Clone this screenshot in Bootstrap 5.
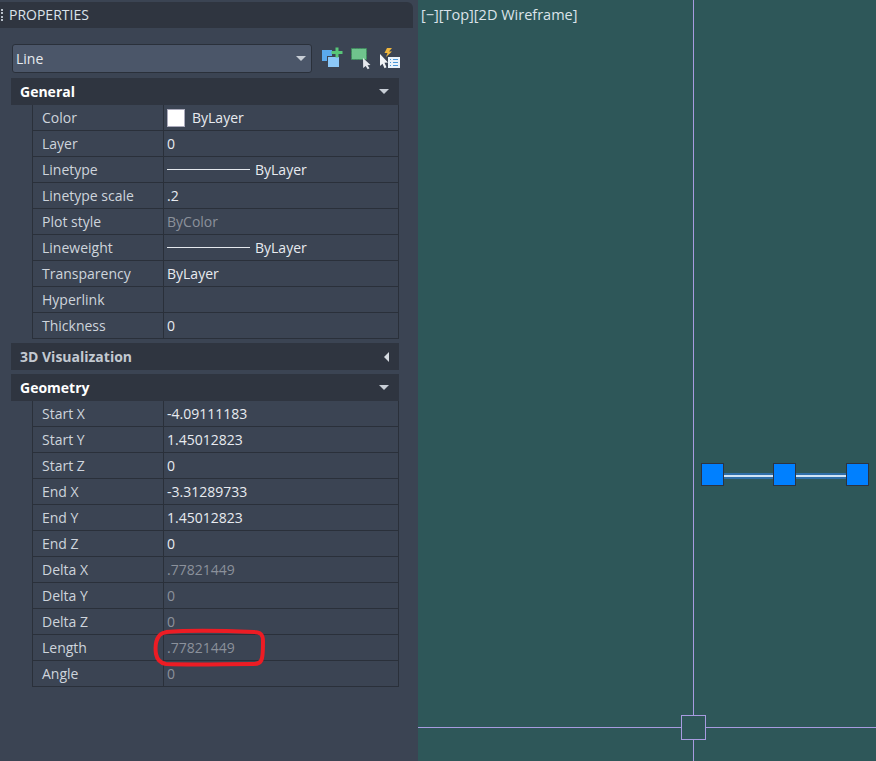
<!DOCTYPE html>
<html lang="en">
<head>
    <meta charset="UTF-8">
    <meta name="viewport" content="width=device-width, initial-scale=1.0">
    <title>Properties</title>
    <link href="https://cdn.jsdelivr.net/npm/bootstrap@5.3.3/dist/css/bootstrap.min.css" rel="stylesheet">
    <style>
        html, body { height: 100%; overflow: hidden; }
        body { background: #2e5759; font-family: "Open Sans", "Liberation Sans", sans-serif; font-size: 14px; }
        .app-shell { width: 876px; height: 761px; }
        .side-panel { width: 418px; height: 761px; background: #3b4453; flex: none; }
        .panel-head { width: 413px; height: 26px; background: #2f3540; color: #dce3ea; font-size: 14px; line-height: 22px; margin-top: 2px; border-top-right-radius: 6px; }
        .panel-grip { width: 2px; height: 12px; margin: 0 6px 0 1px; border-left: 2px dotted #b8c0ca; }
        .panel-body { padding: 16px 19px 0 11px; }
        .type-row { height: 28px; margin-bottom: 6px; padding-left: 1px; }
        .type-select { width: 300px; height: 29px; background: #4b5669; border: 1px solid #2a303a; border-radius: 3px; color: #e6ebf0; padding: 0 5px 0 3px; flex: none; }
        .tool-icons { gap: 5px; margin-left: 8px; flex: none; }
        .arrow-down { width: 0; height: 0; border-left: 5px solid transparent; border-right: 5px solid transparent; border-top: 5px solid #c8ced6; }
        .arrow-left { width: 0; height: 0; border-top: 5px solid transparent; border-bottom: 5px solid transparent; border-right: 5px solid #d5dae0; }
        .group-head { height: 27px; background: #2f3540; color: #fff; font-weight: 700; padding: 0 10px 0 9px; line-height: 27px; margin-bottom: 0; }
        .group-head.is-closed { color: #c3c9d1; margin-bottom: 4px; }
        .prop-rows { margin-left: 21px; margin-bottom: 4px; border-left: 1px solid #2a303a; border-right: 1px solid #2a303a; }
        .prop-row { height: 26px; border-bottom: 1px solid #2a303a; line-height: 25px; }
        .prop-name { width: 131px; padding-left: 9px; color: #ced4dc; border-right: 1px solid #2a303a; flex: none; }
        .prop-val { padding-left: 3px; color: #e8ebf0; white-space: nowrap; }
        .prop-val.muted-val { color: #8b919b; }
        .swatch { width: 18px; height: 18px; background: #fff; border: 1px solid #aab; margin-right: 7px; }
        .line-sample { width: 83px; height: 1px; background: #e4e8ed; margin-right: 5px; }
        .viewport { position: relative; flex: 1; overflow: hidden; color: #dce3ea; }
        .view-label { padding: 5px 0 0 3px; font-size: 14.5px; line-height: 20px; }
        .cross-v { position: absolute; left: 275px; top: 0; bottom: 0; width: 1px; background: #a79be0; }
        .cross-h { position: absolute; left: 0; right: 0; top: 727px; height: 1px; background: #a79be0; }
        .cross-box { position: absolute; left: 263px; top: 715px; width: 25px; height: 25px; background: #2e5759; border: 1px solid #a79be0; }
        .grip { position: absolute; top: 463px; width: 23px; height: 23px; background: #0080ff; border: 1px solid #2c3340; }
        .sel-line { position: absolute; left: 304px; top: 473px; width: 130px; height: 6px; background: #2e6ea8; padding-top: 2px; }
        .sel-line::after { content: ""; display: block; height: 2px; background: #cfe3f5; }
        .red-mark { position: absolute; left: 150px; top: 625px; pointer-events: none; }
    </style>
</head>
<body>
    <div class="app-shell d-flex position-relative">
        <div class="side-panel">
            <div class="panel-head d-flex align-items-center">
                <span class="panel-grip"></span>
                <span>PROPERTIES</span>
            </div>
            <div class="panel-body">
                <div class="type-row d-flex align-items-center">
                    <div class="type-select d-flex align-items-center justify-content-between">
                        <span>Line</span><span class="arrow-down"></span>
                    </div>
                    <div class="tool-icons d-flex align-items-center">
                        <svg width="24" height="24" viewBox="0 0 24 24"><rect x="2" y="4" width="10" height="11" fill="#5aa9ec"/><rect x="7.500" y="10.500" width="12" height="11" fill="#8cc8f8" stroke="#3b4453"/><path d="M15.500 1.500h3v3.500h4v3h-4v3.500h-3V8h-4V5h4z" fill="#58c678"/></svg>
                        <svg width="24" height="24" viewBox="0 0 24 24"><rect x="2.500" y="2.500" width="15" height="11" fill="#6fc48d" stroke="#3a8f5a" stroke-dasharray="2 1"/><path d="M14 12l7.500 7-3 .3 2 3-1.800 1-2-3.300-2.500 2z" fill="#e6e9ee"/></svg>
                        <svg width="24" height="24" viewBox="0 0 24 24"><path d="M9 2h5l-3 3.500h3L8 11l1.500-4H6.500z" fill="#f0b63c"/><path d="M2 8l8 8.500-3.500.3 2 4.500-2 1-2-4.500-2.500 2.200z" fill="#f2f4f6"/><rect x="10" y="11" width="12" height="11" fill="#e9f2fa"/><path d="M12 13.500h1m2 0h5m-8 3h1m2 0h5m-8 3h1m2 0h5" stroke="#4a97d8"/></svg>
                    </div>
                </div>

                <div class="group-head d-flex align-items-center justify-content-between"><span>General</span><span class="arrow-down"></span></div>
                <div class="prop-rows">
                    <div class="prop-row d-flex"><div class="prop-name">Color</div><div class="prop-val d-flex align-items-center"><span class="swatch"></span>ByLayer</div></div>
                    <div class="prop-row d-flex"><div class="prop-name">Layer</div><div class="prop-val">0</div></div>
                    <div class="prop-row d-flex"><div class="prop-name">Linetype</div><div class="prop-val d-flex align-items-center"><span class="line-sample"></span>ByLayer</div></div>
                    <div class="prop-row d-flex"><div class="prop-name">Linetype scale</div><div class="prop-val">.2</div></div>
                    <div class="prop-row d-flex"><div class="prop-name">Plot style</div><div class="prop-val muted-val">ByColor</div></div>
                    <div class="prop-row d-flex"><div class="prop-name">Lineweight</div><div class="prop-val d-flex align-items-center"><span class="line-sample"></span>ByLayer</div></div>
                    <div class="prop-row d-flex"><div class="prop-name">Transparency</div><div class="prop-val">ByLayer</div></div>
                    <div class="prop-row d-flex"><div class="prop-name">Hyperlink</div><div class="prop-val"></div></div>
                    <div class="prop-row d-flex"><div class="prop-name">Thickness</div><div class="prop-val">0</div></div>
                </div>

                <div class="group-head is-closed d-flex align-items-center justify-content-between"><span>3D Visualization</span><span class="arrow-left"></span></div>

                <div class="group-head d-flex align-items-center justify-content-between"><span>Geometry</span><span class="arrow-down"></span></div>
                <div class="prop-rows">
                    <div class="prop-row d-flex"><div class="prop-name">Start X</div><div class="prop-val">-4.09111183</div></div>
                    <div class="prop-row d-flex"><div class="prop-name">Start Y</div><div class="prop-val">1.45012823</div></div>
                    <div class="prop-row d-flex"><div class="prop-name">Start Z</div><div class="prop-val">0</div></div>
                    <div class="prop-row d-flex"><div class="prop-name">End X</div><div class="prop-val">-3.31289733</div></div>
                    <div class="prop-row d-flex"><div class="prop-name">End Y</div><div class="prop-val">1.45012823</div></div>
                    <div class="prop-row d-flex"><div class="prop-name">End Z</div><div class="prop-val">0</div></div>
                    <div class="prop-row d-flex"><div class="prop-name">Delta X</div><div class="prop-val muted-val">.77821449</div></div>
                    <div class="prop-row d-flex"><div class="prop-name">Delta Y</div><div class="prop-val muted-val">0</div></div>
                    <div class="prop-row d-flex"><div class="prop-name">Delta Z</div><div class="prop-val muted-val">0</div></div>
                    <div class="prop-row d-flex"><div class="prop-name">Length</div><div class="prop-val muted-val">.77821449</div></div>
                    <div class="prop-row d-flex"><div class="prop-name">Angle</div><div class="prop-val muted-val">0</div></div>
                </div>
            </div>
        </div>
        <div class="viewport">
            <div class="view-label">[−][Top][2D Wireframe]</div>
            <div class="cross-v"></div>
            <div class="cross-h"></div>
            <div class="cross-box"></div>
            <div class="sel-line"></div>
            <div class="grip" style="left: 283px"></div>
            <div class="grip" style="left: 355px"></div>
            <div class="grip" style="left: 428px"></div>
        </div>
        <svg class="red-mark" width="120" height="46" viewBox="0 0 120 46"><path d="M16 7C40 5 80 6 104 7c7 0 9 3 9 9 0 7 0 13-1 17-1 5-4 6-10 6-28 0-58 1-86 0-6-1-9-5-10-10-1-7 0-14 3-18 2-3 6-4 11-4z" fill="none" stroke="#ed1c24" stroke-width="4"/></svg>
    </div>
    <script src="https://cdn.jsdelivr.net/npm/bootstrap@5.3.3/dist/js/bootstrap.bundle.min.js"></script>
</body>
</html>
